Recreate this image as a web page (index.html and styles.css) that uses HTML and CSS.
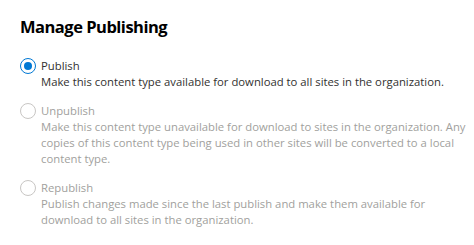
FILE: index.html
```html
<!DOCTYPE html>
<html lang="en">
<head>
    <meta charset="UTF-8">
    <meta name="viewport" content="width=device-width, initial-scale=1.0">
    <title>Manage Publishing</title>
    <link rel="stylesheet" href="styles.css">
</head>
<body>
    <h1>Manage Publishing</h1>
    <div class="choice-list">
        <div class="choice">
            <span class="radio checked"></span>
            <div class="choice-text">
                <div class="choice-label">Publish</div>
                <div class="choice-desc">Make this content type available for download to all sites in the organization.</div>
            </div>
        </div>
        <div class="choice disabled">
            <span class="radio"></span>
            <div class="choice-text">
                <div class="choice-label">Unpublish</div>
                <div class="choice-desc">Make this content type unavailable for download to sites in the organization. Any copies of this content type being used in other sites will be converted to a local content type.</div>
            </div>
        </div>
        <div class="choice disabled">
            <span class="radio"></span>
            <div class="choice-text">
                <div class="choice-label">Republish</div>
                <div class="choice-desc">Publish changes made since the last publish and make them available for download to all sites in the organization.</div>
            </div>
        </div>
    </div>
</body>
</html>
```

FILE: styles.css
```css
body {
    font-family: "Open Sans", Arial, sans-serif;
    margin: 0;
    padding: 15px 0 15px 20px;
    background-color: #ffffff;
    color: #323130;
}

h1 {
    margin: 0;
    font-size: 16.5px;
    line-height: 24px;
    font-weight: 700;
    letter-spacing: -0.5px;
    color: #000000;
}

.choice-list {
    display: flex;
    flex-direction: column;
    gap: 13px;
    margin-top: 19px;
    max-width: 451px;
}

.choice {
    display: flex;
    gap: 5px;
    font-size: 11.3px;
    line-height: 16px;
}

.radio {
    flex: none;
    width: 14px;
    height: 14px;
    border: 1px solid #c8c6c4;
    border-radius: 50%;
    position: relative;
}

.radio.checked {
    border-color: #0078d4;
}

.radio.checked::after {
    content: "";
    position: absolute;
    left: 3px;
    top: 3px;
    width: 8px;
    height: 8px;
    border-radius: 50%;
    background-color: #0078d4;
}

.disabled {
    color: #a19f9d;
}
```
